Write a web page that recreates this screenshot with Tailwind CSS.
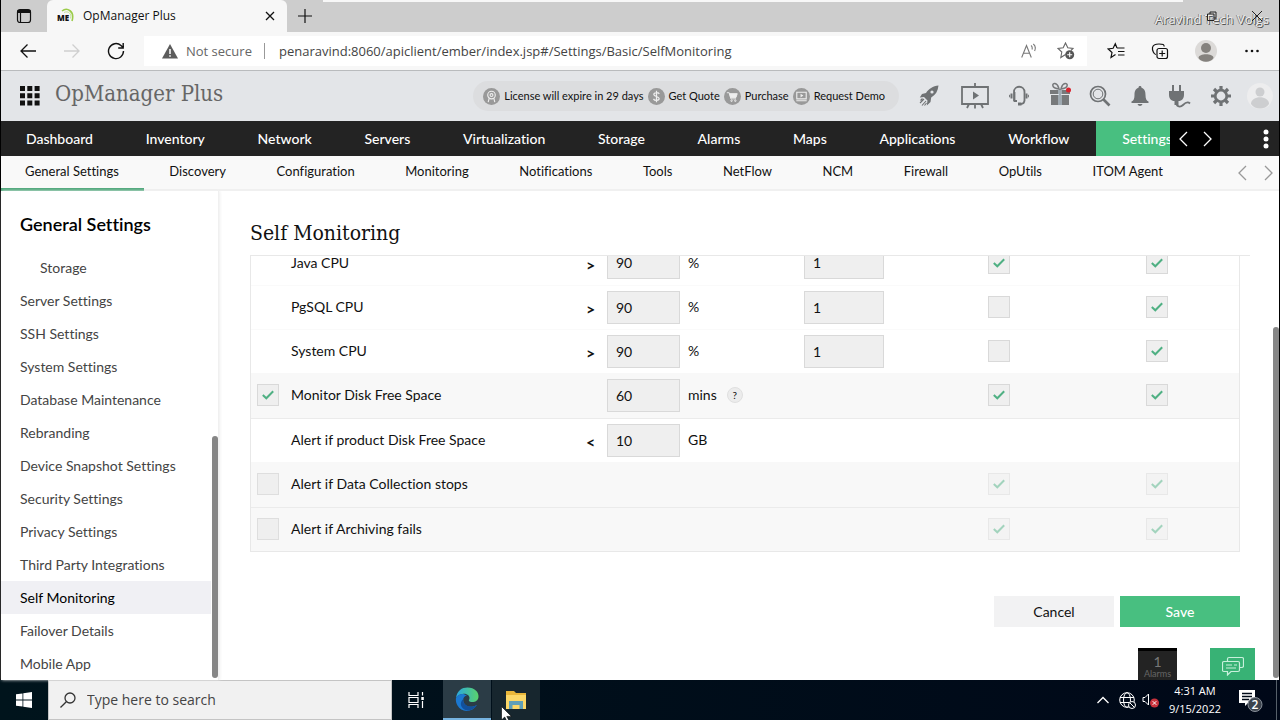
<!DOCTYPE html>
<html lang="en">
<head>
    <meta charset="UTF-8">
    <meta name="viewport" content="width=device-width, initial-scale=1.0">
    <title>OpManager Plus</title>
    <script src="https://cdn.jsdelivr.net/npm/@tailwindcss/browser@4"></script>
</head>
<body class="relative h-screen flex flex-col overflow-hidden bg-white font-['Lato','Liberation_Sans',sans-serif] text-sm text-[#111] [font-variant-ligatures:none]">
    <svg class="hidden">
        <symbol id="check" viewBox="0 0 12 12"><path d="M.8 6 4.300 9.300 11.200 2.300" fill="none" stroke="currentColor" stroke-width="2"/></symbol>
        <symbol id="left" viewBox="0 0 10 16"><path d="M9 1 2 8l7 7" fill="none" stroke="currentColor" stroke-width="1.3"/></symbol>
        <symbol id="right" viewBox="0 0 10 16"><path d="m1 1 7 7-7 7" fill="none" stroke="currentColor" stroke-width="1.3"/></symbol>
    </svg>

    <div class="flex-1 min-h-0 flex flex-col border-x border-black">
        <!-- browser tabs -->
        <div class="h-8 shrink-0 flex bg-[#cdcdcd] font-['Open_Sans',sans-serif]">
            <button class="w-[46px] flex items-center justify-center" aria-label="Tab actions">
                <svg class="w-4 h-4" viewBox="0 0 16 16" fill="none" stroke="#111" stroke-width="1.2"><rect x="1.5" y="1.5" width="13" height="13" rx="2.5"/><path d="M1.5 3.5h13" stroke-width="3"/><path d="M4.5 4v10"/></svg>
            </button>
            <div class="w-[240px] flex items-center bg-[#f7f7f7] rounded-t-md pl-2.5 pr-3 text-xs">
                <svg class="w-[18px] h-[18px] mr-2" viewBox="0 0 18 18">
                    <path d="M5 4C10 0 18 4 15 14" fill="none" stroke="#9ccc4a" stroke-width="1.6"/>
                    <path d="M7 5.5c4-2 8 1 6.500 6" fill="none" stroke="#c5e19a"/>
                    <text x="0" y="14" font-size="8" font-weight="800" fill="#111">ME</text>
                </svg>
                <span class="flex-1">OpManager Plus</span>
                <button aria-label="Close tab"><svg class="w-2.5 h-2.5" viewBox="0 0 10 10" stroke="#111" stroke-width="1.3"><path d="m1 1 8 8M9 1 1 9"/></svg></button>
            </div>
            <button class="w-9 flex items-center justify-center" aria-label="New tab"><svg class="w-3.5 h-3.5" viewBox="0 0 14 14" stroke="#111" stroke-width="1.2"><path d="M7 0v14M0 7h14"/></svg></button>
            <div class="flex-1 border-t-2 border-[#f7f7f7] mr-24"></div>
        </div>

        <!-- address bar -->
        <div class="h-[39px] shrink-0 flex items-center bg-[#f7f7f7] border-b border-[#b9bbbd] pl-[18px] pr-5 font-['Open_Sans',sans-serif] text-[13px]">
            <button class="mr-[26px]" aria-label="Back"><svg class="w-[18px] h-4" viewBox="0 0 18 16" fill="none" stroke="#111" stroke-width="1.3"><path d="M17 8H2M8.500 1.500 2 8l6.500 6.500"/></svg></button>
            <button class="mr-[26px]" aria-label="Forward"><svg class="w-[18px] h-4" viewBox="0 0 18 16" fill="none" stroke="#cfcfcf" stroke-width="1.3"><path d="M1 8h15M9.500 1.500 16 8l-6.500 6.500"/></svg></button>
            <button class="mr-[19px]" aria-label="Refresh"><svg class="w-[18px] h-[18px]" viewBox="0 0 18 18" fill="none" stroke="#111" stroke-width="1.4"><path d="M16.500 9A7.500 7.500 0 1 1 14 3.500L16 5.500M16.200 1v5h-5"/></svg></button>
            <div class="flex-1 h-[30px] flex items-center bg-white px-[18px] pr-3 mr-5">
                <svg class="w-4 h-4 mr-2" viewBox="0 0 16 16"><path d="M8 1 16 15.500H0z" fill="#5c5c5c"/><path d="M8 6v5M8 12.300v1.500" stroke="#fff" stroke-width="1.5"/></svg>
                <span class="text-[#666] pr-3 mr-3.5 border-r border-[#999] leading-4">Not secure</span>
                <input class="flex-1 outline-none text-[#444]" aria-label="Address" value="penaravind:8060/apiclient/ember/index.jsp#/Settings/Basic/SelfMonitoring">
                <svg class="w-4 h-4 mr-5" viewBox="0 0 16 16" fill="none" stroke="#777" stroke-width="1.1"><path d="M.7 14.500 5.500 2.500l4.800 12M2.400 10.300h6.200M10 2.500c1.400 1 1.400 2.500 1 4M12.300 1c2.300 1.700 2.300 4.600 1.300 7"/></svg>
                <svg class="w-[18px] h-[18px]" viewBox="0 0 18 18" fill="none" stroke="#666" stroke-width="1.1"><path d="M8.500 12.500 3.800 15.500l1-5.500L1 6.500l5.200-.7L8.500 1l2.300 4.800 5.200.7-2 2"/><circle cx="12.700" cy="12.700" r="4.500" fill="#555" stroke="none"/><path d="M12.700 10.200v5M10.200 12.700h5" stroke="#fff"/></svg>
            </div>
            <button class="mr-[26px]" aria-label="Favorites"><svg class="w-[18px] h-[18px]" viewBox="0 0 18 18" fill="none" stroke="#111" stroke-width="1.2"><path d="M10 6h7.500M11 9.500h6.500M11 13h6.500M8.500 12.500 4 15.500l1-5L1.200 7l4.900-.7L8.300 1.800 10 6"/></svg></button>
            <button class="mr-[26px]" aria-label="Collections"><svg class="w-[18px] h-[18px]" viewBox="0 0 18 18" fill="none" stroke="#111" stroke-width="1.2"><path d="M5 12.500C3 12.500 1 8 1.500 5.500S3.500 2 8 2s5 .5 5.200 2.500"/><rect x="6" y="6.500" width="10.500" height="10" rx="2"/><path d="M11.200 8.500v6M8.200 11.500h6"/></svg></button>
            <svg class="w-[22px] h-[22px] mr-[28px]" viewBox="0 0 22 22"><circle cx="11" cy="11" r="11" fill="#dcdad8"/><circle cx="11" cy="8" r="5" fill="#85827e"/><path d="M3.500 18c0-5 15-5 15 0-3 5-12 5-15 0z" fill="#85827e"/></svg>
            <svg class="w-3.5 h-1" viewBox="0 0 14 4" fill="#111"><circle cx="1.500" cy="2" r="1.300"/><circle cx="7" cy="2" r="1.300"/><circle cx="12.500" cy="2" r="1.300"/></svg>
        </div>

        <!-- product header -->
        <header class="h-[50px] shrink-0 flex items-center bg-[#e3e5e8] pl-[19px] text-[#6f7274]">
            <svg class="w-5 h-5 mr-[15px]" viewBox="0 0 20 20" fill="#111"><path d="M0 0h5v5H0zM7.300 0h5v5h-5zM14.600 0h5v5h-5zM0 7.300h5v5H0zM7.300 7.300h5v5h-5zM14.600 7.300h5v5h-5zM0 14.600h5v5H0zM7.300 14.600h5v5h-5zM14.600 14.600h5v5h-5z"/></svg>
            <span class="flex-1 pb-1 font-['DejaVu_Serif_Condensed','DejaVu_Serif',serif] text-[22px] text-[#666]">OpManager Plus</span>
            <div class="h-[30px] flex items-center gap-1 rounded-full bg-[#dcdddf] pl-2.5 pr-3.5 mr-5 text-[11px] text-[#111]">
                <svg class="w-[17px] h-[17px]" viewBox="0 0 18 18" fill="none" stroke="#eee" stroke-width="1.2"><circle cx="9" cy="9" r="9" fill="#999" stroke="none"/><circle cx="9" cy="7.500" r="4"/><circle cx="9" cy="7.500" r="1.500"/><path d="m6.500 11-1 4M11.500 11l1 4"/></svg>
                <span>License will expire in 29 days</span>
                <svg class="w-[17px] h-[17px]" viewBox="0 0 18 18" fill="none" stroke="#eee" stroke-width="1.3"><circle cx="9" cy="9" r="9" fill="#999" stroke="none"/><path d="M12 6.200C10.500 4.200 6 4.800 6.200 7s5.600 1.800 5.600 4.200-4.800 2.700-6 .3M9 3v12"/></svg>
                <span>Get Quote</span>
                <svg class="w-[17px] h-[17px]" viewBox="0 0 18 18" fill="none" stroke="#eee"><circle cx="9" cy="9" r="9" fill="#999" stroke="none"/><path d="M3 5h2.500l1.800 6.500h5.500"/><path d="M6 6h8l-1.300 4H7z" fill="#eee"/><circle cx="8" cy="13.500" r=".8"/><circle cx="12" cy="13.500" r=".8"/></svg>
                <span>Purchase</span>
                <svg class="w-[17px] h-[17px]" viewBox="0 0 18 18" fill="none" stroke="#eee" stroke-width="1.200"><circle cx="9" cy="9" r="9" fill="#999" stroke="none"/><path d="M4 4.500h10v7H4zM3.500 13.500h11"/><path d="m8 6 3 2-3 2z" fill="#eee" stroke="none"/></svg>
                <span>Request Demo</span>
            </div>
            <div class="flex items-center">
                <svg class="w-5 h-[22px] mr-[22px]" viewBox="0 0 20 22" fill="currentColor"><path d="M19.500.5C14 1 9.500 4 7 8L3 9 .8 12.500l4.200-.5 3.500 3.500-.7 5L11.500 17l.7-4.500C16.500 10 19 6 19.500.5z"/><circle cx="13" cy="7" r="1.600" fill="#e3e5e8"/><path d="m5 14-4 4M7 16l-4 4.500M3.500 13.500l-2 2M7.500 18l-2 2.500" stroke="currentColor" stroke-width="1.100"/></svg>
                <svg class="w-7 h-[26px] mr-5" viewBox="0 0 28 26" fill="none" stroke="currentColor" stroke-width="1.800"><path d="M1 4h26v17H1zM14 0v4M14 21v4.500M8 21l-2 4M20 21l2 4"/><path d="m12 8.500 6 4-6 4z" fill="currentColor" stroke="none"/></svg>
                <svg class="w-5 h-[22px] mr-5" viewBox="0 0 20 22" fill="none" stroke="currentColor" stroke-width="1.800"><path d="M5 16V7c0-7 10.500-7 10.500 0v9M5.500 7v9H8M15.500 15c0 3-2 4-4 4"/><path d="M2.500 8.500v5M17.500 8.500v5" stroke-width="2"/><path d="M.6 9.800v2.500M19.400 9.800v2.500" stroke-width="1"/><path d="M9 19h3.500" stroke-width="3"/></svg>
                <svg class="w-[22px] h-6 mr-[18px] mb-1" viewBox="0 0 22 24"><path d="M1 8h20v4H1zM2 13h18v10H2z" fill="#77797b"/><path d="M11 7v16" stroke="#c9dbe9" stroke-width="3"/><path d="M11 7v16" stroke="#77797b"/><path d="M10 7C2 6 3 1 6 1.500S9 4 10 7zM12 7c8-1 7-6 4-5.500S13 4 12 7z" fill="none" stroke="#77797b" stroke-width="1.500"/><circle cx="19.500" cy="8" r="2.500" fill="#d9232e"/></svg>
                <svg class="w-[22px] h-[22px] mr-5" viewBox="0 0 22 22" fill="none" stroke="currentColor"><circle cx="9" cy="9" r="7.500" stroke-width="1.700"/><circle cx="9" cy="9" r="4.800"/><path d="m14.500 14.500 6 6" stroke-width="2.700"/></svg>
                <svg class="w-[18px] h-[22px] mr-5" viewBox="0 0 18 22" fill="currentColor"><path d="M9 1c1 0 1.500.7 1.500 1.700C14 4 14.500 7 14.500 10c0 4 1 5.500 3 6.500V18H.5v-1.500c2-1 3-2.500 3-6.500 0-3 .5-6 4-7.300C7.500 1.700 8 1 9 1zM6.500 19h5c-.8 2.500-4.200 2.500-5 0z"/></svg>
                <svg class="w-[22px] h-[23px] mr-5" viewBox="0 0 22 23" fill="currentColor"><path d="M0 6h15v3.500c0 4-2 6.500-5.500 6.500v4h-4v-4C2 16 0 13.500 0 9.500z"/><path d="M4 0v7M11 0v7" stroke="currentColor" stroke-width="2"/><path d="M7.500 18c0 4 4 4.500 6.500 2s5-3.500 7-1.500" fill="none" stroke="currentColor" stroke-width="1.800"/></svg>
                <svg class="w-5 h-5 mr-4" viewBox="0 0 20 20" fill="none" stroke="currentColor"><circle cx="10" cy="10" r="5.800" stroke-width="2.800"/><path d="M10 0v3.500M10 16.500V20M0 10h3.500M16.500 10H20M3 3l2.500 2.500M14.500 14.500 17 17M3 17l2.500-2.500M14.500 5.500 17 3" stroke-width="3.200"/></svg>
                <svg class="w-[26px] h-[28px] mr-1.5" viewBox="0 0 26 28"><circle cx="13" cy="14" r="13" fill="#ededee"/><circle cx="13" cy="10" r="4.500" fill="#cdced0"/><path d="M4 22c0-9 18-9 18 0-4 6-14 6-18 0z" fill="#cdced0"/></svg>
            </div>
        </header>

        <!-- main menu -->
        <nav class="h-[35px] shrink-0 flex bg-[#232323] text-white">
            <div class="flex-1 min-w-0 overflow-hidden">
                <div class="flex justify-between -mr-7 font-medium whitespace-nowrap">
                    <a href="#" class="px-[26px] pl-[25px] leading-[35px]">Dashboard</a>
                    <a href="#" class="px-[26px] leading-[35px]">Inventory</a>
                    <a href="#" class="px-[26px] leading-[35px]">Network</a>
                    <a href="#" class="px-[26px] leading-[35px]">Servers</a>
                    <a href="#" class="px-[26px] leading-[35px]">Virtualization</a>
                    <a href="#" class="px-[26px] leading-[35px]">Storage</a>
                    <a href="#" class="px-[26px] leading-[35px]">Alarms</a>
                    <a href="#" class="px-[26px] leading-[35px]">Maps</a>
                    <a href="#" class="px-[26px] leading-[35px]">Applications</a>
                    <a href="#" class="px-[26px] leading-[35px]">Workflow</a>
                    <a href="#" class="px-[26px] leading-[35px] bg-[#48bf80]">Settings</a>
                </div>
            </div>
            <div class="w-[50px] flex items-center justify-around bg-black">
                <button aria-label="Previous"><svg class="w-2.5 h-4"><use href="#left"/></svg></button>
                <button aria-label="Next"><svg class="w-2.5 h-4"><use href="#right"/></svg></button>
            </div>
            <button class="w-[59px] flex items-center justify-end pr-2.5" aria-label="More"><svg class="w-1.5 h-5" viewBox="0 0 6 20" fill="#fff"><circle cx="3" cy="3" r="2.500"/><circle cx="3" cy="10" r="2.500"/><circle cx="3" cy="17" r="2.500"/></svg></button>
        </nav>

        <!-- settings menu -->
        <nav class="h-[35px] shrink-0 flex bg-[#f9f9f9] border-b-2 border-[#f0f0f0] text-[13px]">
            <div class="flex-1 flex justify-between mr-[49px] whitespace-nowrap">
                <a href="#" class="px-[25px] pl-6 h-[35px] leading-[31px] border-b-3 border-[#4da67a]">General Settings</a>
                <a href="#" class="px-[25px] leading-[31px]">Discovery</a>
                <a href="#" class="px-[25px] leading-[31px]">Configuration</a>
                <a href="#" class="px-[25px] leading-[31px]">Monitoring</a>
                <a href="#" class="px-[25px] leading-[31px]">Notifications</a>
                <a href="#" class="px-[25px] leading-[31px]">Tools</a>
                <a href="#" class="px-[25px] leading-[31px]">NetFlow</a>
                <a href="#" class="px-[25px] leading-[31px]">NCM</a>
                <a href="#" class="px-[25px] leading-[31px]">Firewall</a>
                <a href="#" class="px-[25px] leading-[31px]">OpUtils</a>
                <a href="#" class="px-[25px] leading-[31px]">ITOM Agent</a>
            </div>
            <div class="flex items-center gap-[17px] pr-[5px] text-[#999]">
                <button aria-label="Previous"><svg class="w-2.5 h-4"><use href="#left"/></svg></button>
                <button aria-label="Next"><svg class="w-2.5 h-4"><use href="#right"/></svg></button>
            </div>
        </nav>

        <div class="relative flex-1 min-h-0 flex">
            <aside class="relative w-[218px] shrink-0 border-r border-[#f0f0f0] shadow-[1px_0_3px_#eee] text-[#444]">
                <h2 class="pt-[19px] pl-[19px] h-[60px] text-lg leading-7 font-semibold text-black">General Settings</h2>
                <ul class="mr-[7px] leading-[33px]">
                    <li><a href="#" class="block pl-[39px]">Storage</a></li>
                    <li><a href="#" class="block pl-[19px]">Server Settings</a></li>
                    <li><a href="#" class="block pl-[19px]">SSH Settings</a></li>
                    <li><a href="#" class="block pl-[19px]">System Settings</a></li>
                    <li><a href="#" class="block pl-[19px]">Database Maintenance</a></li>
                    <li><a href="#" class="block pl-[19px]">Rebranding</a></li>
                    <li><a href="#" class="block pl-[19px]">Device Snapshot Settings</a></li>
                    <li><a href="#" class="block pl-[19px]">Security Settings</a></li>
                    <li><a href="#" class="block pl-[19px]">Privacy Settings</a></li>
                    <li><a href="#" class="block pl-[19px]">Third Party Integrations</a></li>
                    <li><a href="#" class="block pl-[19px] bg-[#f0f0f4] text-black">Self Monitoring</a></li>
                    <li><a href="#" class="block pl-[19px]">Failover Details</a></li>
                    <li><a href="#" class="block pl-[19px]">Mobile App</a></li>
                </ul>
                <div class="absolute right-0 bottom-0.5 w-1.5 h-[242px] rounded-full bg-[#868686]"></div>
            </aside>

            <main class="flex-1 min-w-0 pl-[31px] pr-[29px] pt-[26px]">
                <h1 class="h-[38px] leading-8 font-['DejaVu_Serif_Condensed','DejaVu_Serif',serif] text-[21px] text-[#111]">Self Monitoring</h1>
                <div class="border-t border-[#e8e8e8]">
                    <div class="mr-2.5 overflow-hidden border-x border-b border-[#e8e8e8]">
                        <table class="w-full table-fixed -mt-[15px]">
                            <colgroup>
                                <col class="w-10"><col><col class="w-6"><col class="w-[197px]"><col class="w-[184px]"><col class="w-[158px]"><col class="w-[93px]">
                            </colgroup>
                            <tbody>
                                <tr class="h-11">
                                    <td></td>
                                    <td>Java CPU</td>
                                    <td class="pt-1 pl-[3px] text-base font-bold">&gt;</td>
                                    <td><div class="flex items-center"><input class="w-[73px] h-[33px] px-2 bg-[#efefef] border border-[#d9d9d9]" aria-label="Java CPU threshold" value="90"><span class="ml-2">%</span></div></td>
                                    <td><input class="block w-20 h-[33px] px-2 bg-[#efefef] border border-[#d9d9d9]" aria-label="Java CPU polls" value="1"></td>
                                    <td><label class="grid w-[22px] h-[22px] place-items-center text-[#4fb083]"><input type="checkbox" class="col-start-1 row-start-1 appearance-none w-[22px] h-[22px] bg-[#efefef] border border-[#d9d9d9]" aria-label="Java CPU email" checked><svg class="col-start-1 row-start-1 w-3 h-3"><use href="#check"/></svg></label></td>
                                    <td><label class="grid w-[22px] h-[22px] place-items-center text-[#4fb083]"><input type="checkbox" class="col-start-1 row-start-1 appearance-none w-[22px] h-[22px] bg-[#efefef] border border-[#d9d9d9]" aria-label="Java CPU alarm" checked><svg class="col-start-1 row-start-1 w-3 h-3"><use href="#check"/></svg></label></td>
                                </tr>
                                <tr class="h-11 border-t border-[#fafafa]">
                                    <td></td>
                                    <td>PgSQL CPU</td>
                                    <td class="pt-1 pl-[3px] text-base font-bold">&gt;</td>
                                    <td><div class="flex items-center"><input class="w-[73px] h-[33px] px-2 bg-[#efefef] border border-[#d9d9d9]" aria-label="PgSQL CPU threshold" value="90"><span class="ml-2">%</span></div></td>
                                    <td><input class="block w-20 h-[33px] px-2 bg-[#efefef] border border-[#d9d9d9]" aria-label="PgSQL CPU polls" value="1"></td>
                                    <td><input type="checkbox" class="block appearance-none w-[22px] h-[22px] bg-[#efefef] border border-[#d9d9d9]" aria-label="PgSQL CPU email"></td>
                                    <td><label class="grid w-[22px] h-[22px] place-items-center text-[#4fb083]"><input type="checkbox" class="col-start-1 row-start-1 appearance-none w-[22px] h-[22px] bg-[#efefef] border border-[#d9d9d9]" aria-label="PgSQL CPU alarm" checked><svg class="col-start-1 row-start-1 w-3 h-3"><use href="#check"/></svg></label></td>
                                </tr>
                                <tr class="h-11 border-t border-[#fafafa]">
                                    <td></td>
                                    <td>System CPU</td>
                                    <td class="pt-1 pl-[3px] text-base font-bold">&gt;</td>
                                    <td><div class="flex items-center"><input class="w-[73px] h-[33px] px-2 bg-[#efefef] border border-[#d9d9d9]" aria-label="System CPU threshold" value="90"><span class="ml-2">%</span></div></td>
                                    <td><input class="block w-20 h-[33px] px-2 bg-[#efefef] border border-[#d9d9d9]" aria-label="System CPU polls" value="1"></td>
                                    <td><input type="checkbox" class="block appearance-none w-[22px] h-[22px] bg-[#efefef] border border-[#d9d9d9]" aria-label="System CPU email"></td>
                                    <td><label class="grid w-[22px] h-[22px] place-items-center text-[#4fb083]"><input type="checkbox" class="col-start-1 row-start-1 appearance-none w-[22px] h-[22px] bg-[#efefef] border border-[#d9d9d9]" aria-label="System CPU alarm" checked><svg class="col-start-1 row-start-1 w-3 h-3"><use href="#check"/></svg></label></td>
                                </tr>
                                <tr class="h-[45px] bg-[#f8f8f8] border-b border-[#ebebeb]">
                                    <td class="pl-1.5"><label class="grid w-[22px] h-[22px] place-items-center text-[#4fb083]"><input id="disk" type="checkbox" class="col-start-1 row-start-1 appearance-none w-[22px] h-[22px] bg-[#efefef] border border-[#d9d9d9]" checked><svg class="col-start-1 row-start-1 w-3 h-3"><use href="#check"/></svg></label></td>
                                    <td><label for="disk">Monitor Disk Free Space</label></td>
                                    <td></td>
                                    <td><div class="flex items-center"><input class="w-[73px] h-[33px] px-2 bg-[#efefef] border border-[#d9d9d9]" aria-label="Disk check interval" value="60"><span class="ml-2">mins</span><button class="ml-2.5 w-4 h-4 rounded-full bg-[#ececec] border border-[#e0e0e0] text-[10px] leading-3" aria-label="Help">?</button></div></td>
                                    <td></td>
                                    <td><label class="grid w-[22px] h-[22px] place-items-center text-[#4fb083]"><input type="checkbox" class="col-start-1 row-start-1 appearance-none w-[22px] h-[22px] bg-[#efefef] border border-[#d9d9d9]" aria-label="Disk email" checked><svg class="col-start-1 row-start-1 w-3 h-3"><use href="#check"/></svg></label></td>
                                    <td><label class="grid w-[22px] h-[22px] place-items-center text-[#4fb083]"><input type="checkbox" class="col-start-1 row-start-1 appearance-none w-[22px] h-[22px] bg-[#efefef] border border-[#d9d9d9]" aria-label="Disk alarm" checked><svg class="col-start-1 row-start-1 w-3 h-3"><use href="#check"/></svg></label></td>
                                </tr>
                                <tr class="h-11">
                                    <td></td>
                                    <td>Alert if product Disk Free Space</td>
                                    <td class="pt-1 pl-[3px] text-base font-bold">&lt;</td>
                                    <td><div class="flex items-center"><input class="w-[73px] h-[33px] px-2 bg-[#efefef] border border-[#d9d9d9]" aria-label="Free space threshold" value="10"><span class="ml-2">GB</span></div></td>
                                    <td></td>
                                    <td></td>
                                    <td></td>
                                </tr>
                                <tr class="h-[45px] bg-[#f8f8f8] border-b border-[#ebebeb]">
                                    <td class="pl-1.5"><input id="collection" type="checkbox" class="block appearance-none w-[22px] h-[22px] bg-[#efefef] border border-[#dedede]"></td>
                                    <td><label for="collection">Alert if Data Collection stops</label></td>
                                    <td></td>
                                    <td></td>
                                    <td></td>
                                    <td><label class="grid w-[22px] h-[22px] place-items-center text-[#4fb083] opacity-50"><input type="checkbox" class="col-start-1 row-start-1 appearance-none w-[22px] h-[22px] bg-[#efefef] border border-[#d9d9d9]" aria-label="Collection email" checked disabled><svg class="col-start-1 row-start-1 w-3 h-3"><use href="#check"/></svg></label></td>
                                    <td><label class="grid w-[22px] h-[22px] place-items-center text-[#4fb083] opacity-50"><input type="checkbox" class="col-start-1 row-start-1 appearance-none w-[22px] h-[22px] bg-[#efefef] border border-[#d9d9d9]" aria-label="Collection alarm" checked disabled><svg class="col-start-1 row-start-1 w-3 h-3"><use href="#check"/></svg></label></td>
                                </tr>
                                <tr class="h-11 bg-[#f8f8f8]">
                                    <td class="pl-1.5"><input id="archiving" type="checkbox" class="block appearance-none w-[22px] h-[22px] bg-[#efefef] border border-[#dedede]"></td>
                                    <td><label for="archiving">Alert if Archiving fails</label></td>
                                    <td></td>
                                    <td></td>
                                    <td></td>
                                    <td><label class="grid w-[22px] h-[22px] place-items-center text-[#4fb083] opacity-50"><input type="checkbox" class="col-start-1 row-start-1 appearance-none w-[22px] h-[22px] bg-[#efefef] border border-[#d9d9d9]" aria-label="Archiving email" checked disabled><svg class="col-start-1 row-start-1 w-3 h-3"><use href="#check"/></svg></label></td>
                                    <td><label class="grid w-[22px] h-[22px] place-items-center text-[#4fb083] opacity-50"><input type="checkbox" class="col-start-1 row-start-1 appearance-none w-[22px] h-[22px] bg-[#efefef] border border-[#d9d9d9]" aria-label="Archiving alarm" checked disabled><svg class="col-start-1 row-start-1 w-3 h-3"><use href="#check"/></svg></label></td>
                                </tr>
                            </tbody>
                        </table>
                    </div>
                </div>
                <div class="flex justify-end gap-1.5 mt-11 mr-2.5">
                    <button class="w-[120px] h-[31px] bg-[#f2f2f3]">Cancel</button>
                    <button class="w-[120px] h-[31px] bg-[#48bf80] text-white font-medium">Save</button>
                </div>
            </main>

            <!-- floating widgets -->
            <div class="absolute bottom-0 right-[102px] w-[39px] h-8 bg-[#232323] border-t-3 border-black text-center text-[#777]">
                <div class="text-sm leading-[22px]">1</div>
                <div class="text-[9px] leading-none -mt-1 text-[#666]">Alarms</div>
            </div>
            <button class="absolute bottom-0 right-6 w-[45px] h-8 flex items-center justify-center bg-[#38b275]" aria-label="Chat">
                <svg class="w-[22px] h-5 mt-1" viewBox="0 0 22 20" fill="none" stroke="#c8f0dc" stroke-width="1.200"><path d="M5.500 5V3c0-1 .5-1.500 1.500-1.500h13c1 0 1.500.5 1.500 1.500v7c0 1-.5 1.500-2 1.500h-2"/><path d="M2 5.500h14c1 0 1.500.5 1.500 1.500v7c0 1-.5 1.500-1.500 1.500H9L5.500 19v-3.500H2c-1 0-1.500-.5-1.500-1.500V7c0-1 .5-1.500 1.500-1.500zM4 9h6M4 12h10M12 9h3"/></svg>
            </button>
            <div class="absolute right-0 bottom-0.5 w-1.5 h-[351px] rounded-full bg-[#868686]"></div>
        </div>
    </div>

    <!-- taskbar -->
    <footer class="h-10 shrink-0 flex items-center bg-linear-to-r from-[#00141c] to-[#000818] font-['Open_Sans',sans-serif] text-white">
        <button class="w-12 h-10 flex items-center justify-center" aria-label="Start"><svg class="w-4 h-4" viewBox="0 0 16 16" fill="#fff"><path d="M0 2.300 6.500 1.400v6.200H0zM7.300 1.300 16 0v7.600H7.300zM0 8.400h6.500v6.200L0 13.700zM7.300 8.400H16V16l-8.700-1.300z"/></svg></button>
        <label class="w-[344px] h-10 flex items-center gap-[11px] pl-[11px] bg-[#f1f1f1] border border-[#c4c4c4]">
            <svg class="w-4 h-4" viewBox="0 0 16 16" fill="none" stroke="#333" stroke-width="1.300"><circle cx="10" cy="6" r="5"/><path d="M6.300 9.700.5 15.500"/></svg>
            <input class="flex-1 outline-none text-sm placeholder:text-[#444]" placeholder="Type here to search" aria-label="Search">
        </label>
        <button class="w-[51px] pr-1 flex justify-center" aria-label="Task view"><svg class="w-4 h-4" viewBox="0 0 16 16" fill="none" stroke="#fff" stroke-width="1.200"><path d="M1 0v3.500h9V0M1 16v-3.500h9V16M1 5.500h9v5H1zM14.500 0v3.500M14.500 9v7"/><path d="M13.300 5h2.500v3h-2.500z" fill="#fff" stroke="none"/></svg></button>
        <button class="w-12 h-10 flex items-center justify-center bg-[#2b3c46] border-b-2 border-[#76b3e0] mr-px" aria-label="Edge">
            <svg class="w-6 h-6" viewBox="0 0 24 24">
                <defs><linearGradient id="edge" x1="0" x2="1"><stop offset="0" stop-color="#2aa7e0"/><stop offset="1" stop-color="#5ad36b"/></linearGradient></defs>
                <path d="M1 11C2 3.500 7 .5 12.500.5 19.500.5 24 5 23.500 10c-.4 4-4 5.500-7.500 5-2.500-.5-2.500-1.500-1.700-2.700C15.500 9 12 6.500 8.500 6.800 5 7 2.500 8.500 1 11z" fill="url(#edge)"/>
                <path d="M1 11c2-4 7-5.500 11-2.500-3 .5-4.500 3-3.500 6.500 1.500 4.500 7 6.500 13.500 3-5 8-16 7.500-19.500.5C.8 15.500.7 13 1 11z" fill="#1b78d0"/>
                <path d="M8.300 12c-1 6 6.500 10 13.700 6-3 4.500-7.500 6-11 5.300C5 21 4.500 15 8.300 12z" fill="#12509b"/>
            </svg>
        </button>
        <button class="w-12 h-10 flex items-center justify-center bg-[#17262e]" aria-label="File Explorer">
            <svg class="w-[22px] h-5" viewBox="0 0 22 20"><path d="M1 1h8l2 2h10v16H1z" fill="#e9b63a"/><path d="M1 5h20v14H1z" fill="#fbd768"/><path d="M4 19v-8h14v8h-3.500v-4h-7v4z" fill="#5f9fb8"/></svg>
        </button>
        <div class="flex-1"></div>
        <svg class="w-3 h-2 mr-2.5" viewBox="0 0 12 8" fill="none" stroke="#fff" stroke-width="1.300"><path d="M.5 7 6 1.500 11.500 7"/></svg>
        <svg class="w-[17px] h-[17px] mr-1.5" viewBox="0 0 17 17" fill="none" stroke="#fff"><circle cx="8" cy="8" r="7.300"/><ellipse cx="8" cy="8" rx="3.500" ry="7.300"/><path d="M1 5.500h14M1 10.500h14"/><circle cx="13" cy="13" r="3.500" fill="#000a18"/><path d="m10.800 10.800 4.400 4.400"/></svg>
        <svg class="w-[17px] h-4 mr-2.5" viewBox="0 0 17 16" fill="none" stroke="#fff"><path d="M1 5.500h2L6.500 2v11L3 9.500H1z"/><circle cx="12.500" cy="11" r="4.500" fill="#c8323c" stroke="none"/><path d="m10.700 9.200 3.600 3.600M14.300 9.200l-3.600 3.600"/></svg>
        <div class="text-center text-[11px] leading-[18px]">4:31 AM<br>9/15/2022</div>
        <svg class="w-6 h-6 ml-[18px] mr-[13px]" viewBox="0 0 24 24"><path d="M0 2h16v13H9l-3 3v-3H0z" fill="#fff"/><path d="M3 5.500h10M3 8.500h10M3 11.500h7" stroke="#000a18" stroke-width="1.300"/><circle cx="16" cy="16.500" r="7" fill="#3b434d" stroke="#89909a"/><text x="16" y="21" font-size="12" font-weight="600" text-anchor="middle" fill="#fff">2</text></svg>
        <div class="h-10 border-l border-[#56606a] w-1"></div>
    </footer>

    <!-- channel watermark over the window buttons -->
    <div class="absolute top-2.5 right-[11px] font-['Open_Sans',sans-serif] text-[13px] leading-[18px] text-[#eee] [text-shadow:1px_1px_0_#555,-1px_0_0_#888]">Aravind Tech Volgs</div>
    <svg class="absolute top-[11px] right-[63px] w-2.5 h-2.5" viewBox="0 0 10 10" fill="none" stroke="#222"><path d="M.5 3h6.500v6.500H.5zM3 3V1h6v6H7"/></svg>
    <svg class="absolute top-[11px] right-[18px] w-2.5 h-2.5" viewBox="0 0 10 10" stroke="#222"><path d="m0 0 10 10M10 0 0 10"/></svg>

    <!-- pointer -->
    <svg class="absolute left-[501px] -bottom-0.5 w-3 h-4" viewBox="0 0 12 16"><path d="M.5.5v13.500l3.200-3 2.500 5 2-1-2.400-4.600h4.700z" fill="#fff" stroke="#000" stroke-width=".6"/></svg>
</body>
</html>
